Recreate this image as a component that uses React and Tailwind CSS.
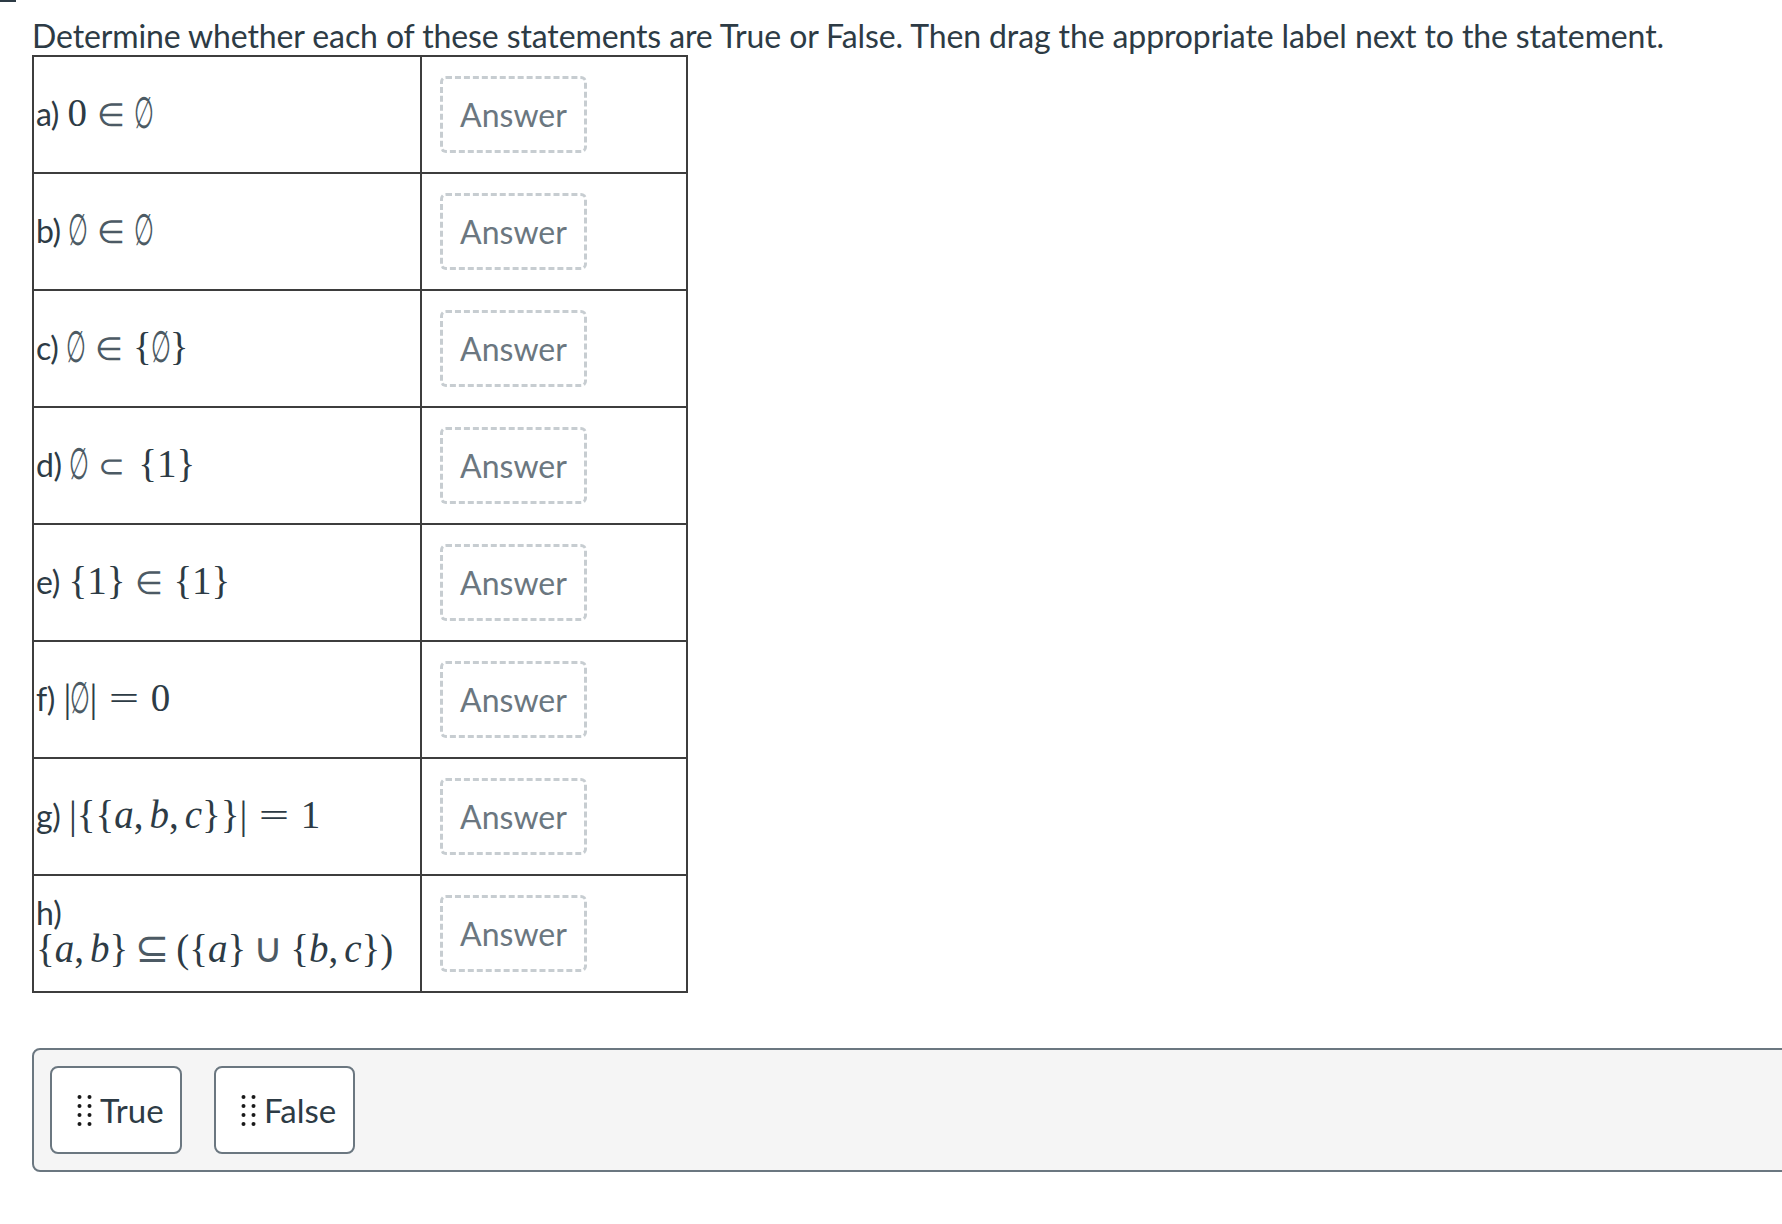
const ROWS = [
  { label: "a)", math: <>0<Op>∈</Op><Empty /></> },
  { label: "b)", math: <><Empty /><Op>∈</Op><Empty /></> },
  { label: "c)", math: <><Empty /><Op>∈</Op>{"{"}<Empty />{"}"}</> },
  { label: "d)", math: <><Empty /><Op wide>⊂</Op>{"{1}"}</> },
  { label: "e)", math: <>{"{1}"}<Op>∈</Op>{"{1}"}</> },
  { label: "f)", math: <>|<Empty />|<Eq />0</> },
  { label: "g)", math: <>|{"{{"}<i>a</i><Comma /><i>b</i><Comma /><i>c</i>{"}}"}|<Eq />1</> },
];

function Op({ children, wide }) {
  return <span className={`ml-[10px] font-['DejaVu_Sans'] text-[32px] leading-[0] font-extralight text-[#4c5a64] ${wide ? "mr-[13px]" : "mr-[10px]"}`}>{children}</span>;
}

function BigOp({ children }) {
  return <span className="mx-[7px] font-['DejaVu_Sans'] text-[41px] leading-[0] font-extralight text-[#4c5a64]">{children}</span>;
}

function Eq() {
  return <span className="mx-[10px] font-['DejaVu_Sans'] text-[40px] leading-[0] font-extralight">=</span>;
}

function Comma() {
  return <span className="mr-[6px]">,</span>;
}

// narrow slashed oval, like the math font's empty set
function Empty() {
  return (
    <span className="inline-block w-[18px] origin-center scale-x-[0.58] scale-y-[1.12] text-center font-['Liberation_Serif'] leading-[0] text-[#4c5a64]">
      <span className="-ml-[8px] inline-block w-[31px]">∅</span>
    </span>
  );
}

function Answer() {
  return (
    <div className="flex h-[77px] w-[147px] items-center justify-center rounded-[6px] border-[3px] border-dashed border-[#c7cdd1] text-[32px] text-[#6b7780]">
      Answer
    </div>
  );
}

function Handle() {
  return (
    <svg width="16" height="31" viewBox="0 0 16 31" className="shrink-0 fill-[#1a1a1a]">
      {[2, 11, 20, 29].map((y) => (
        <g key={y}>
          <circle cx="2.5" cy={y} r="2" />
          <circle cx="12.5" cy={y} r="2" />
        </g>
      ))}
    </svg>
  );
}

function Token({ text, width }) {
  return (
    <div className={`flex h-[88px] items-center gap-[7px] rounded-[8px] border-2 border-[#6b7780] bg-white pl-[25px] text-[33px] ${width}`}>
      <Handle />
      <span className="pt-[2px]">{text}</span>
    </div>
  );
}

export default function App() {
  return (
    <div className="relative min-h-[1224px] overflow-hidden bg-white font-['Lato'] text-[#2d3b45]">
      <div className="absolute left-0 top-0 h-[2px] w-[16px] bg-[#2d3b45]" />
      <div className="pl-[32px] pt-[15px]">
        <p className="h-[40px] text-[32px] leading-[42px] tracking-[-0.11px] whitespace-nowrap">
          Determine whether each of these statements are True or False. Then drag the appropriate label next to the statement.
        </p>
        <table className="w-[656px] table-fixed border-collapse border-2 border-[#3d3d3d]">
          <tbody>
            {ROWS.map((r) => (
              <tr key={r.label} className="h-[117px]">
                <td className="w-[388px] border-2 border-[#3d3d3d] pl-[2px] pb-[2px] text-[32px] tracking-[-0.5px]">
                  {r.label} <span className="ml-[1px] font-['Liberation_Serif'] text-[39px] tracking-normal">{r.math}</span>
                </td>
                <td className="border-2 border-[#3d3d3d] pl-[18px]"><Answer /></td>
              </tr>
            ))}
            <tr className="h-[117px]">
              <td className="border-2 border-[#3d3d3d] pl-[2px] pb-[3px] text-[32px] leading-[36px]">
                <div className="-mt-[3px]">h)</div>
                <div className="font-['Liberation_Serif'] text-[39px] whitespace-nowrap">
                  {"{"}<i>a</i><Comma /><i>b</i>{"}"}<BigOp>⊆</BigOp>({"{"}<i>a</i>{"}"}<BigOp>∪</BigOp>{"{"}<i>b</i><Comma /><i>c</i>{"})"}
                </div>
              </td>
              <td className="border-2 border-[#3d3d3d] pl-[18px]"><Answer /></td>
            </tr>
          </tbody>
        </table>
        <div className="mt-[55px] -mr-[40px] flex h-[124px] items-center gap-[32px] rounded-[8px] border-2 border-[#6b7780] bg-[#f5f5f5] pl-[16px]">
          <Token text="True" width="w-[132px]" />
          <Token text="False" width="w-[141px]" />
        </div>
      </div>
    </div>
  );
}
